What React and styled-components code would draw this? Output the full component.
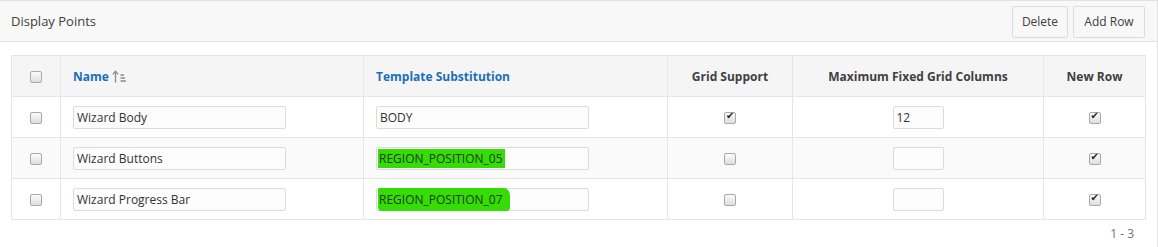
import React from 'react'
import styled, { createGlobalStyle } from "styled-components";

const Global = createGlobalStyle`
  body {
    margin: 0;
    background: #fff;
    font-family: "Open Sans", "Liberation Sans", sans-serif;
    color: #404040;
  }
`;

const Region = styled.section`
  width: 1158px;
  height: 247px;
  box-sizing: border-box;
  border-top: 1px solid #e2e2e2;
  border-right: 1px solid #e2e2e2;
  background: #fff;
`;

const Header = styled.header`
  height: 40px;
  display: flex;
  align-items: center;
  justify-content: space-between;
  padding: 0 12px 0 11px;
  background: #f8f8f8;
  border-bottom: 1px solid #e2e2e2;
  h2 {
    margin: 0;
    font-size: 13px;
    font-weight: 400;
    color: #404040;
  }
`;

const Buttons = styled.div`
  display: flex;
  gap: 5px;
  margin-top: 1px;
`;

const Button = styled.button`
  height: 32px;
  width: ${p => p.w}px;
  border: 1px solid #dcdcdc;
  border-radius: 2px;
  background: #f8f8f8;
  color: #404040;
  font-family: inherit;
  font-size: 12px;
  padding: 0;
`;

const Body = styled.div`
  padding: 13px 12px 0 11px;
`;

const Table = styled.table`
  width: 1134px;
  border-collapse: collapse;
  table-layout: fixed;
  border: 1px solid #e6e6e6;
  font-size: 12px;
  th, td {
    border-left: 1px solid #e6e6e6;
    padding: 0 12px;
    height: 41px;
    box-sizing: border-box;
  }
  th {
    background: #f5f5f5;
    font-weight: 700;
    color: #404040;
  }
  tbody tr {
    border-top: 1px solid #e6e6e6;
  }
  tbody tr:nth-child(even) td {
    background: #fafafa;
  }
`;

const Cell = styled.td`
  text-align: ${p => p.align || "left"};
`;

const Head = styled.th`
  && {
    text-align: ${p => p.align || "left"};
    color: ${p => (p.link ? "#1a6fba" : "#404040")};
  }
`;

const SortIcon = styled.svg`
  vertical-align: -2px;
  margin-left: 3px;
`;

const Box = styled.span`
  display: inline-block;
  width: 12px;
  height: 12px;
  box-sizing: border-box;
  border: 1px solid #a9a9a9;
  border-radius: 2px;
  background: linear-gradient(#fbfbfb, #dedede);
  vertical-align: middle;
  position: relative;
  &::after {
    content: ${p => (p.checked ? '"\\2714"' : '""')};
    position: absolute;
    left: 1px;
    top: -3px;
    font-size: 10px;
    color: #222;
    font-family: "DejaVu Sans", sans-serif;
  }
`;

const Field = styled.div`
  display: flex;
  align-items: center;
  width: ${p => p.w}px;
  height: 23px;
  box-sizing: border-box;
  border: 1px solid #dcdcdc;
  border-radius: 2px;
  background: #fcfcfc;
  padding: 0 3px;
  margin: ${p => (p.center ? "0 auto" : "0")};
  color: #333;
  font-size: 12px;
`;

const Mark = styled.span`
  background: #35dc06;
  padding: ${p => (p.wavy ? "3px 7px 3px 1px" : "1px 2px 1px 1px")};
  margin-left: -2px;
  border-radius: ${p => (p.wavy ? "1px 6px 3px 4px / 1px 8px 4px 4px" : "0")};
  color: #1e3a10;
`;

const Footer = styled.div`
  text-align: right;
  padding: 5px 11px 0 0;
  font-size: 12px;
  color: #707070;
`;

const rows = [
  { name: "Wizard Body", tpl: "BODY", grid: true, cols: "12", newRow: true },
  { name: "Wizard Buttons", tpl: "REGION_POSITION_05", mark: true, grid: false, cols: "", newRow: true },
  { name: "Wizard Progress Bar", tpl: "REGION_POSITION_07", mark: true, wavy: true, grid: false, cols: "", newRow: true },
];

function App() {
  return (
    <Region>
      <Global />
      <Header>
        <h2>Display Points</h2>
        <Buttons>
          <Button w={56}>Delete</Button>
          <Button w={72}>Add Row</Button>
        </Buttons>
      </Header>
      <Body>
        <Table>
          <colgroup>
            <col style={{ width: 49 }} />
            <col style={{ width: 303 }} />
            <col style={{ width: 304 }} />
            <col style={{ width: 125 }} />
            <col style={{ width: 251 }} />
            <col style={{ width: 102 }} />
          </colgroup>
          <thead>
            <tr>
              <Head align="center"><Box /></Head>
              <Head link>
                Name
                <SortIcon width="15" height="13" viewBox="0 0 15 13">
                  <path d="M3.5 12.5V1.5M0.8 4.4L3.5 1.2L6.2 4.4" stroke="#8a8a8a" strokeWidth="1.3" fill="none" />
                  <path d="M8.5 5h3.5M8.5 8h4.5M8.5 11h5.5" stroke="#555" strokeWidth="1" />
                </SortIcon>
              </Head>
              <Head link>Template Substitution</Head>
              <Head align="center">Grid Support</Head>
              <Head align="center">Maximum Fixed Grid Columns</Head>
              <Head align="center">New Row</Head>
            </tr>
          </thead>
          <tbody>
            {rows.map(r => (
              <tr key={r.name}>
                <Cell align="center"><Box /></Cell>
                <Cell><Field w={213}>{r.name}</Field></Cell>
                <Cell>
                  <Field w={213}>
                    {r.mark ? <Mark wavy={r.wavy}>{r.tpl}</Mark> : r.tpl}
                  </Field>
                </Cell>
                <Cell align="center"><Box checked={r.grid} /></Cell>
                <Cell><Field w={51} center>{r.cols}</Field></Cell>
                <Cell align="center"><Box checked={r.newRow} /></Cell>
              </tr>
            ))}
          </tbody>
        </Table>
        <Footer>1 - 3</Footer>
      </Body>
    </Region>
  )
}

export default App
